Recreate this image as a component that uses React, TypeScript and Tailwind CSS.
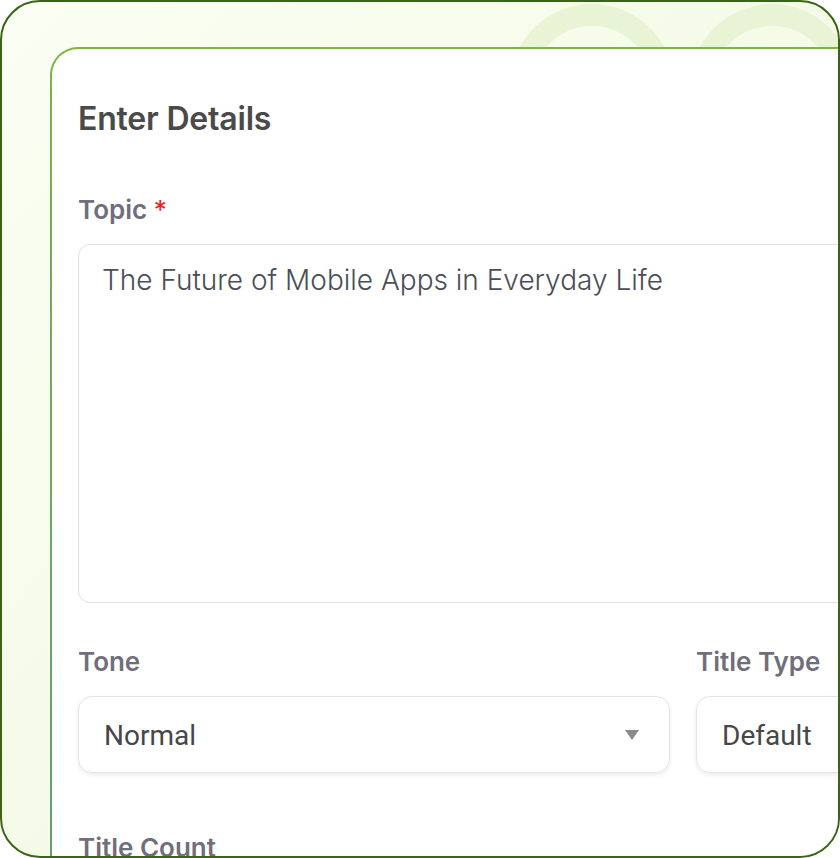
import { useState } from "react";

// Pantalla de detalles del generador de títulos
const toneOptions = ["Normal", "Formal", "Casual", "Friendly"];
const typeOptions = ["Default", "Question", "How To", "List"];

const App = () => {
  const [topic, setTopic] = useState("The Future of Mobile Apps in Everyday Life");
  const [tone] = useState(toneOptions[0]);
  const [titleType] = useState(typeOptions[0]);

  return (
    <div className="w-[840px] h-[858px] bg-white" style={{ fontFamily: "Inter, 'Noto Sans', sans-serif" }}>
      <div className="relative w-full h-full overflow-hidden rounded-[40px] border-2 border-[#3b6414] bg-gradient-to-br from-[#fbfef3] to-[#eef7dd]">
        {/* Decoración de anillos */}
        <div className="absolute left-[508px] top-[2px] w-[164px] h-[164px] rounded-full border-[22px] border-[#e5f2cf] opacity-80" />
        <div className="absolute left-[688px] top-[2px] w-[164px] h-[164px] rounded-full border-[22px] border-[#e5f2cf] opacity-80" />

        <div className="relative pl-[48px] pt-[45px]">
          <div className="w-[860px] h-[900px] rounded-tl-[28px] p-[2px] pr-0 pb-0 bg-gradient-to-b from-[#7cb540] to-[#5f9a78]">
            <div className="w-full h-full rounded-tl-[26px] bg-white pl-[26px] pt-[52px]">
              <h2 className="text-[32px] leading-[36px] font-semibold text-[#4a4a4a] tracking-[-0.2px]">
                Enter Details
              </h2>

              <label className="block mt-[58px] text-[26px] leading-[30px] font-semibold text-[#6f6e79]">
                Topic <span className="font-normal text-[#ee1c1c]">*</span>
              </label>
              <textarea
                value={topic}
                onChange={(e) => setTopic(e.target.value)}
                className="mt-[19px] block w-[800px] h-[359px] resize-none rounded-[12px] border-[1.5px] border-[#dde0e4] px-[23px] py-[17px] text-[28px] leading-[36px] font-light text-[#4b4e57] outline-none"
              />

              <div className="mt-[44px] flex gap-[26px]">
                <div className="w-[592px] shrink-0">
                  <label className="block text-[26px] leading-[30px] font-semibold text-[#6f6e79]">Tone</label>
                  <div className="mt-[19px] h-[77px] flex items-center justify-between rounded-[14px] border-[1.5px] border-[#e4e4e4] shadow-[0_2px_4px_rgba(0,0,0,0.08)] pl-[25px] pr-[29px] pt-[3px]">
                    <span className="text-[28px] text-[#474747]" style={{ fontFamily: "Roboto, sans-serif" }}>{tone}</span>
                    <svg width="16" height="12" viewBox="0 0 16 12" className="mb-[3px]">
                      <path d="M1 1 L15 1 L8 11 Z" fill="#8a8a8a" />
                    </svg>
                  </div>
                </div>
                <div className="w-[300px] shrink-0">
                  <label className="block text-[26px] leading-[30px] font-semibold text-[#6f6e79]">Title Type</label>
                  <div className="mt-[19px] h-[77px] flex items-center rounded-[14px] border-[1.5px] border-[#e4e4e4] shadow-[0_2px_4px_rgba(0,0,0,0.08)] pl-[25px] pt-[3px]">
                    <span className="text-[28px] text-[#474747]" style={{ fontFamily: "Roboto, sans-serif" }}>{titleType}</span>
                  </div>
                </div>
              </div>

              <label className="block mt-[60px] text-[26px] leading-[30px] font-semibold text-[#6f6e79]">Title Count</label>
            </div>
          </div>
        </div>
      </div>
    </div>
  );
};

export default App;
